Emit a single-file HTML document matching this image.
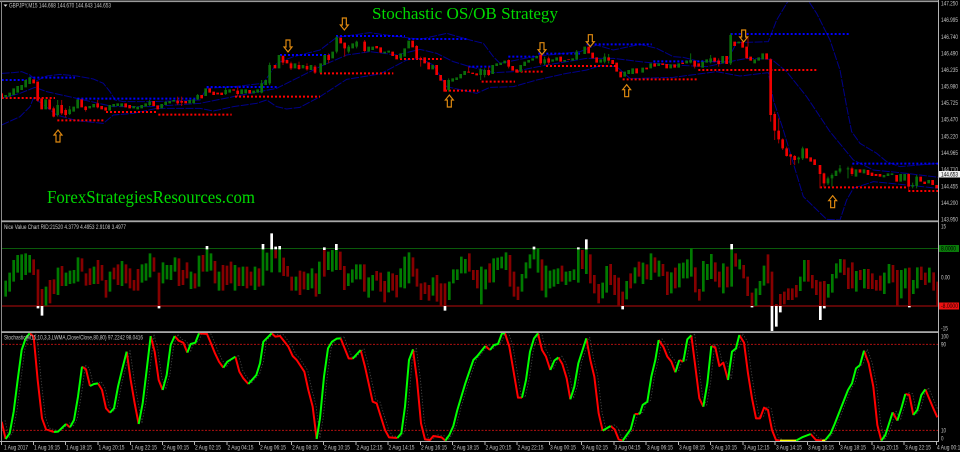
<!DOCTYPE html>
<html><head><meta charset="utf-8"><title>Stochastic OS/OB Strategy</title>
<style>
html,body{margin:0;padding:0;background:#000;width:960px;height:452px;overflow:hidden}
svg{display:block;filter:blur(.3px)}
.ax{font:6.4px "Liberation Sans",sans-serif;fill:#c4c4c4}
</style></head><body>
<svg width="960" height="452" viewBox="0 0 960 452" xmlns="http://www.w3.org/2000/svg">
<defs>
<clipPath id="cm"><rect x="2" y="2" width="936" height="218"/></clipPath>
<clipPath id="cv"><rect x="2" y="222" width="936" height="109"/></clipPath>
<clipPath id="cs"><rect x="2" y="333" width="936" height="108"/></clipPath>
<path id="sr" d="M5 605L17 657M89 340L101 350 113 480 126 595 138 628 162 636M198 612L210 622M246 440L258 448 270 498M294 490L306 510 318 565 330 578M380 395L392 480 404 550 416 612M452 348L464 395 476 480 488 510M524 348L536 362 550 368 562 398M597 340L621 342 633 370 645 400 657 425 670 443M706 410L718 455 730 475 745 492M815 340L826 350 840 348 865 380 878 408 890 420 913 455 925 510 938 560 950 657M1022 355L1046 415 1058 416M1082 390L1095 440 1118 545 1130 550 1155 630 1167 652 1192 654M1239 388L1251 480 1263 610 1275 658 1290 660 1300 648 1325 652 1336 662M1456 378L1470 390M1515 340L1528 380 1540 450 1554 533 1566 533M1614 340L1626 390 1638 410 1651 450M1675 412L1687 432 1700 475 1711 538M1759 355L1771 420 1783 470 1796 580 1808 632M1832 618L1844 628 1856 658 1868 662M1904 582L1916 582M1976 360L1990 380 2002 410 2014 425 2026 457M2038 420L2050 425M2074 346L2086 440 2098 535 2110 560M2134 378L2146 382 2158 438 2170 428 2184 480M2218 345L2232 368 2244 460 2256 535 2268 595 2280 595 2292 563 2304 570 2316 630 2328 660 2340 662M2432 642L2448 660 2466 662M2592 392L2606 430 2620 500 2632 615 2644 662M2678 577L2692 602M2716 522L2728 525 2740 585M2776 508L2800 565 2812 592"/>
<path id="sg" d="M17 657L29 640 41 575 53 480 65 390 77 355 89 340M162 636L174 635 198 612M210 622L222 600 234 530 246 440M270 498L282 492 294 490M330 578L342 565 354 500 366 450 380 395M416 612L428 550 440 450 452 348M488 510L500 465 512 375 524 348M562 398L572 372 586 368 597 340M670 443L682 425 706 410M745 492L769 465 780 430 790 365 815 340M950 657L960 595 972 470 984 385 996 365 1010 356 1022 355M1058 416L1082 390M1192 654L1204 640 1215 560 1227 420 1239 388M1336 662L1348 645 1360 618 1372 570 1396 490 1420 420 1432 408 1456 378M1470 390L1482 375 1494 372 1506 340 1515 340M1566 533L1578 480 1590 395 1602 355 1614 340M1651 450L1663 422 1675 412M1711 538L1723 500 1735 430 1759 355M1808 632L1832 618M1868 662L1880 645 1892 628 1904 583M1916 582L1920 580 1928 555 1942 545 1954 470 1966 420 1976 360M2026 457L2038 420M2050 425L2062 358 2074 346M2110 560L2122 490 2134 378M2184 480L2196 395 2208 385 2218 345M2388 662L2406 652 2432 642M2476 660L2492 640 2504 612 2544 510 2556 490 2568 445 2580 435 2592 392M2644 662L2656 645 2678 577M2692 602L2704 565 2716 522M2740 585L2752 570 2764 525 2776 508"/>
<path id="au" d="M0 -18L12 -3 6 -3 6 18 -6 18 -6 -3 -12 -3Z"/>
<path id="ad" d="M0 18L12 3 6 3 6 -18 -6 -18 -6 3 -12 3Z"/>
</defs>
<rect width="960" height="452" fill="#000"/>

<!-- MAIN CHART -->
<g clip-path="url(#cm)">
<g transform="scale(.33333)" fill="none">
<g stroke="#00008b" stroke-width="3" stroke-dasharray="24 4">
<path d="M5 220L40 218 65 215 90 225 110 242 140 228 180 223 230 228 280 237 310 250 330 275 345 300 370 305 450 305 600 300 620 265 700 260 790 250 830 190 880 170 960 150 1010 112 1110 98 1180 108 1260 118 1340 100 1410 120 1450 130 1480 170 1500 190 1600 170 1740 155 1790 135 1840 150 1920 133 1970 145 2020 170 2050 172 2100 185 2180 185 2210 128 2305 125 2330 60 2360 10 2370 -5 2420 -5 2450 40 2490 120 2520 210 2540 320 2555 395 2580 430 2630 460 2660 485 2700 500 2815 490"/>
<path d="M5 295L60 280 105 262 140 275 230 295 340 320 450 320 600 310 700 290 830 265 960 200 1040 165 1110 155 1190 165 1260 148 1310 160 1360 185 1410 200 1480 218 1540 215 1640 195 1760 175 1840 175 1920 185 2020 195 2120 200 2190 185 2240 175 2315 178 2360 215 2420 290 2490 395 2560 480 2620 510 2720 520 2815 532"/>
<path d="M5 375L60 350 90 320 100 295 125 310 170 345 230 362 310 370 340 345 400 340 470 325 600 325 640 333 700 320 770 310 800 300 830 320 860 327 900 322 960 290 1040 238 1140 222 1220 180 1260 175 1300 195 1340 260 1430 280 1470 262 1540 260 1610 240 1690 222 1760 210 1800 197 1850 200 1890 235 1920 235 2020 232 2150 215 2220 228 2305 218 2320 300 2350 390 2380 490 2410 590 2480 658 2520 660 2540 600 2560 565 2620 545 2720 555 2815 565"/>
</g>
<g stroke="#0000ff" stroke-width="6" stroke-dasharray="6 6">
<path d="M5 240H80M88 233H225M232 296H595M620 261H830M840 165H1000M1008 108H1215M1225 117H1400M1405 200H1480M1525 170H1610M1615 161H1740M1760 133H1955M1960 184H2190M2192 102H2548M2557 491H2815"/>
</g>
<g stroke="#ff0000" stroke-width="6" stroke-dasharray="6 6">
<path d="M5 294H165M172 361H310M318 336H470M475 344H695M705 290H960M960 220H1180M1200 177H1325M1335 272H1435M1445 245H1545M1550 215H1630M1638 198H1850M1868 238H2090M2095 210H2450M2460 562H2720M2725 573H2815"/>
</g>
<path stroke="#a00000" stroke-width="3" fill="none" d="M113 245V305M161 320V352M185 300V345M197 325V352M257 318V335M293 300V325M533 290V315M545 290V318M713 260V290M849 165V195M873 185V210M897 185V210M921 190V212M945 195V222M986 160V190M1034 128V170M1094 120V158M1250 135V178M1262 170V200M1334 240V275M1406 200V218M1466 200V228M1526 178V205M1622 160V195M1646 170V195M2084 180V205M2156 175V200M2244 112V140M2312 175V365M2324 335V420M2336 355V430M2348 415V450M2360 440V470M2372 462V495M2384 465V495M2460 495V565M2472 518V562M2556 500V528M2726 520V570"/>
<path stroke="#0a6a0a" stroke-width="3" fill="none" d="M173 300V350M209 318V345M449 300V318M593 282V300M677 262V285M785 240V280M809 188V255M1010 108V160M1046 135V160M1070 122V145M1442 205V240M1454 205V232M1346 235V275M1634 170V195M1730 150V180M1814 160V190M1826 162V190M2072 160V190M2132 165V190M2192 100V195M2396 470V490M2408 440V480M2484 530V555M2496 520V560M2520 495V520M2544 500V535M2738 548V565M2750 525V565"/>
<path stroke="#f00000" stroke-width="8" fill="none" d="M5 280V295M101 238V250M113 245V302M125 295V328M149 298V328M161 325V350M185 315V340M197 330V345M245 298V322M257 320V330M293 310V322M305 318V328M317 322V332M377 310V322M389 315V325M461 303V318M473 316V328M533 302V310M545 303V308M557 303V310M605 285V295M629 265V278M641 275V285M653 278V283M665 278V285M701 268V272M713 272V282M749 270V280M825 195V205M849 168V188M861 180V190M873 190V205M897 195V207M921 198V208M945 200V218
M986 165V180M1022 113V130M1034 128V145M1094 125V153M1130 138V145M1142 142V158M1178 155V168M1190 165V178M1238 122V142M1250 138V175M1262 175V180M1274 172V190M1286 187V208M1310 195V225M1322 225V242M1334 240V275M1406 215V218M1418 218V222M1430 220V226M1466 210V225M1526 180V200M1538 198V212M1550 208V218M1622 165V190M1646 175V188M1682 170V185M1706 178V180M1766 140V160M1778 158V175M1790 172V188M1826 172V182M1838 180V192M1850 188V215M1862 215V232M1910 205V220
M1940 203V208M1964 190V200M1988 190V195M2000 192V205M2024 193V203M2048 188V192M2084 183V200M2096 190V200M2144 173V185M2156 182V192M2180 168V192M2204 125V138M2228 125V143M2240 140V175M2252 170V182M2300 160V178M2312 178V345M2324 342V392M2336 392V418M2348 418V445M2360 445V468M2372 463V470M2384 468V480M2420 445V475M2432 472V485M2444 478V495M2460 495V522M2472 520V550M2556 505V522M2580 508V518M2604 510V525M2616 518V528M2628 522V528M2640 522V530M2690 525V545M2726 522V560M2762 530V545M2774 545V552M2798 540V555M2810 555V565"/>
<path stroke="#0a6e0a" stroke-width="8" fill="none" d="M17 285V292M29 278V290M41 265V285M53 258V278M65 255V270M77 240V262M89 232V252M137 298V328M173 315V345M209 328V342M221 320V335M233 298V325M269 318V325M281 312V322M329 315V332M341 312V320M353 310V318M365 310V320M401 318V325M413 320V328M425 315V325M437 310V320M449 305V315M485 312V325M497 305V315M509 303V310M521 300V305M569 300V310M581 298V310M593 285V298M617 265V288M677 270V282M689 268V278M725 268V282M737 268V280M761 272V280M773 268V278M785 250V278M797 240V255M809 195V250M837 165V205M885 190V205M909 195V205M933 195V210
M962 190V218M974 165V195M998 155V175M1010 112V155M1046 140V155M1058 130V145M1070 125V140M1106 140V155M1118 140V150M1154 155V160M1166 152V158M1202 160V175M1214 145V170M1226 122V145M1298 195V208M1346 240V270M1358 235V245M1370 232V240M1382 222V235M1394 213V225M1442 208V225M1454 210V225M1478 195V222M1490 190V198M1502 188V195M1514 182V190M1562 195V216M1574 185V198M1586 180V188M1598 175V182M1610 168V175M1634 178V190M1658 178V185M1670 172V182M1694 180V185M1718 175V182M1730 155V178M1754 140V162M1802 178V188M1814 170V185M1874 215V230M1886 210V222M1898 205V222
M1928 203V218M1952 190V205M1976 190V198M2012 193V205M2036 190V203M2060 182V190M2072 180V188M2108 185V203M2120 178V188M2132 175V186M2168 168V190M2192 105V190M2216 125V130M2264 178V190M2276 172V182M2288 160V178M2396 473V478M2408 445V475M2484 535V550M2496 525V535M2508 512V528M2520 505V515M2544 505V508M2568 508V530M2592 508V520M2652 525V532M2664 520V528M2676 520V525M2702 522V545M2714 522V542M2738 555V560M2750 530V558M2786 540V550"/>
<g fill="#000" stroke="#e08a10" stroke-width="3.5" stroke-linejoin="miter">
<use href="#au" transform="translate(174 408)"/>
<use href="#ad" transform="translate(864 138)"/>
<use href="#ad" transform="translate(1033 72)"/>
<use href="#au" transform="translate(1348 303)"/>
<use href="#ad" transform="translate(1626 146)"/>
<use href="#ad" transform="translate(1771 122)"/>
<use href="#au" transform="translate(1880 272)"/>
<use href="#ad" transform="translate(2231 108)"/>
<use href="#au" transform="translate(2498 605)"/>
</g>
</g>
</g>

<!-- VALUE CHART -->
<line x1="2" y1="248.5" x2="938" y2="248.5" stroke="#0a5a0a" stroke-width="1"/>
<line x1="2" y1="306" x2="938" y2="306" stroke="#7a0808" stroke-width="1.5"/>
<g clip-path="url(#cv)">
<g transform="translate(0 220) scale(.33333)" fill="none" stroke-width="8">
<path stroke="#007a00" d="M17 182V230M29 158V215M41 120V185M53 105V158M65 103V180M77 100V165M89 105V158M138 200V257M174 143V225M198 158V198M210 152V192M222 150V190M234 112V185M282 140V192M330 155V215M366 123V198M426 133V188M438 130V182M450 100V172M489 127V190M501 135V178M513 135V180M525 112V155M573 155V207M597 107V200M621 88V155M633 100V152M657 155V212M705 135V212M729 140V198M765 140V210M789 88V197M801 98V152M815 88V157M839 88V157M888 170V212M924 160V210M936 145V205M958 125V222
M985 95V150M997 90V155M1009 90V150M1045 160V198M1057 148V188M1069 133V178M1081 133V178M1106 172V233M1118 165V212M1166 155V217M1202 145V202M1214 110V205M1227 97V190M1299 172V227M1348 185V240M1360 148V190M1372 148V180M1384 110V160M1396 117V160M1444 140V253M1457 148V208M1481 115V187M1493 113V150M1505 110V145M1518 97V150M1566 162V215M1578 127V175M1590 103V145M1602 88V118M1614 85V158M1638 137V232M1650 152V205M1662 148V200M1674 145V192M1698 155V195M1710 153V185M1722 148V180M1735 88V188M1759 88V162M1808 188V235M1820 138V218M1880 183V238M1905 142V190
M1929 128V192M1953 100V180M1977 122V170M2014 157V220M2038 130V202M2050 128V175M2062 118V175M2074 85V170M2110 123V215M2122 132V180M2134 102V177M2170 130V220M2195 88V200M2219 118V148M2268 205V258M2280 183V225M2292 137V197M2401 170V213M2413 120V185M2485 192V233M2497 162V218M2509 130V175M2521 117V158M2569 153V215M2593 147V205M2653 158V222M2667 132V190M2704 150V235M2716 145V205M2740 180V222M2752 142V205M2788 143V188"/>
<path stroke="#860000" d="M101 118V165M114 148V258M126 207V258M150 180V250M162 178V222M186 138V198M246 115V155M258 160V197M270 145V195M294 120V192M306 135V182M318 180V233M342 143V178M354 133V195M378 133V190M390 145V205M402 180V212M414 147V212M462 112V155M477 158V258M537 115V198M549 150V195M561 127V175M585 160V205M609 105V155M645 123V190M669 135V212M681 137V195M693 125V190M717 142V198M741 140V205M753 155V197M777 145V200M827 90V115M851 113V168M863 138V170M875 170V212M900 152V225M912 155V208M948 160V230
M973 90V170M1021 95V150M1033 138V210M1093 133V215M1130 153V182M1142 158V215M1154 183V247M1178 160V212M1190 165V232M1239 112V170M1251 146V200M1263 190V240M1275 187V222M1287 195V242M1311 165V245M1323 190V258M1335 190V258M1408 100V155M1420 150V180M1432 150V205M1469 130V188M1530 105V200M1542 155V230M1554 200V240M1626 118V212M1686 137V185M1747 90V147M1771 103V190M1783 165V220M1796 192V250M1832 132V195M1844 165V225M1856 173V258M1868 215V258M1892 160V205M1917 125V170
M1941 133V178M1965 112V158M1989 132V168M2002 155V225M2026 143V205M2086 142V217M2098 207V242M2146 127V185M2158 155V202M2182 140V202M2207 100V140M2231 135V175M2243 170V228M2256 218V258M2304 103V190M2316 155V258M2329 252V258M2341 222V258M2353 215V253M2365 205V240M2377 205V240M2389 195V232M2425 120V185M2437 165V205M2449 180V225M2461 185V258M2473 183V258M2533 118V165M2545 143V207M2557 127V205M2581 150V180M2605 147V207M2617 160V207M2629 180V212M2641 167V212M2679 135V187M2692 150V258M2728 143V258M2764 140V180M2776 158V195M2801 157V212M2813 185V258"/>
<path stroke="#ffffff" d="M114 258V265M126 258V287M477 258V265M621 78V88M789 72V88M815 40V88M827 80V88M839 78V88M973 82V90M1009 72V90M1335 258V272M1602 80V88M1735 82V88M1759 58V88M1868 258V268M2195 72V88M2256 258V262M2316 258V335M2329 258V320M2341 258V277M2461 258V300M2473 258V265M2728 258V262"/>
</g>
</g>

<!-- STOCHASTIC -->
<line x1="2" y1="344.4" x2="938" y2="344.4" stroke="#b01010" stroke-width="1" stroke-dasharray="2 1.5"/>
<line x1="2" y1="430.4" x2="938" y2="430.4" stroke="#b01010" stroke-width="1" stroke-dasharray="2 1.5"/>
<g clip-path="url(#cs)">
<g transform="translate(0 220) scale(.33333)" fill="none" stroke-linejoin="round">
<g transform="translate(10 -4)" stroke="#444" stroke-width="2.500" stroke-dasharray="4 5"><use href="#sr"/><use href="#sg"/></g>
<g stroke="#ff0000" stroke-width="6"><use href="#sr"/></g>
<g stroke="#00ff00" stroke-width="6"><use href="#sg"/></g>
<path stroke="#ffff00" stroke-width="6" d="M2340 662H2388M2466 662H2476"/>
</g>
</g>

<!-- frame -->
<rect x="0" y="0.5" width="939" height="1.6" fill="#9a9a9a"/>
<rect x="1" y="1" width="1" height="440" fill="#8a8a8a"/>
<rect x="1" y="220.4" width="938" height="1.8" fill="#a8a8a8"/>
<rect x="1" y="331.2" width="938" height="1.8" fill="#a8a8a8"/>
<rect x="938" y="0" width="1" height="442" fill="#b4b4b4"/>
<rect x="0" y="441" width="939" height="1" fill="#b4b4b4"/>

<!-- titles -->
<text x="372" y="19" font-family="'Liberation Serif',serif" font-size="17" fill="#00d800" textLength="186" lengthAdjust="spacingAndGlyphs">Stochastic OS/OB Strategy</text>
<text x="47" y="203" font-family="'Liberation Serif',serif" font-size="17.5" fill="#00d800" textLength="208" lengthAdjust="spacingAndGlyphs">ForexStrategiesResources.com</text>

<path d="M3.5 4.5H7.5L5.5 6.8Z" fill="#ddd"/>
<text class="ax" x="9" y="7.500" textLength="102" lengthAdjust="spacingAndGlyphs">GBPJPY,M15  144.668 144.670 144.643 144.653</text>
<text class="ax" x="4" y="229" textLength="122" lengthAdjust="spacingAndGlyphs">Nice Value Chart RID:21520 4.3779 4.4953 2.9108 3.4977</text>
<text class="ax" x="4" y="339.500" textLength="139" lengthAdjust="spacingAndGlyphs">Stochastic(M15,10,3,3,LWMA,Close/Close,80,80) 97.2242 98.0416</text>

<!-- price axis -->
<g lengthAdjust="spacingAndGlyphs">
<text class="ax" x="941" y="5.5" textLength="17" lengthAdjust="spacingAndGlyphs">147.250</text>
<text class="ax" x="941" y="22" textLength="17" lengthAdjust="spacingAndGlyphs">146.995</text>
<text class="ax" x="941" y="39" textLength="17" lengthAdjust="spacingAndGlyphs">146.740</text>
<text class="ax" x="941" y="55.5" textLength="17" lengthAdjust="spacingAndGlyphs">146.490</text>
<text class="ax" x="941" y="72" textLength="17" lengthAdjust="spacingAndGlyphs">146.235</text>
<text class="ax" x="941" y="88.5" textLength="17" lengthAdjust="spacingAndGlyphs">145.980</text>
<text class="ax" x="941" y="105" textLength="17" lengthAdjust="spacingAndGlyphs">145.725</text>
<text class="ax" x="941" y="121.5" textLength="17" lengthAdjust="spacingAndGlyphs">145.470</text>
<text class="ax" x="941" y="138.5" textLength="17" lengthAdjust="spacingAndGlyphs">145.220</text>
<text class="ax" x="941" y="155" textLength="17" lengthAdjust="spacingAndGlyphs">144.965</text>
<text class="ax" x="941" y="171.5" textLength="17" lengthAdjust="spacingAndGlyphs">144.710</text>
<text class="ax" x="941" y="188.5" textLength="17" lengthAdjust="spacingAndGlyphs">144.455</text>
<text class="ax" x="941" y="205" textLength="17" lengthAdjust="spacingAndGlyphs">144.200</text>
<text class="ax" x="941" y="221.5" textLength="17" lengthAdjust="spacingAndGlyphs">143.950</text>
<text class="ax" x="941" y="228.5" textLength="5" lengthAdjust="spacingAndGlyphs">15</text>
<text class="ax" x="941" y="279.500" textLength="9" lengthAdjust="spacingAndGlyphs">0.00</text>
<text class="ax" x="941" y="330.500" textLength="7" lengthAdjust="spacingAndGlyphs">-15</text>
<text class="ax" x="941" y="338.500" textLength="7.500" lengthAdjust="spacingAndGlyphs">100</text>
<text class="ax" x="941" y="346.500" textLength="5" lengthAdjust="spacingAndGlyphs">90</text>
<text class="ax" x="941" y="432.500" textLength="5" lengthAdjust="spacingAndGlyphs">10</text>
<text class="ax" x="941" y="440.500" textLength="2.500" lengthAdjust="spacingAndGlyphs">0</text>
</g>
<rect x="939" y="171" width="21" height="6.5" fill="#f0f0f0"/>
<text x="941" y="176.5" font-family="'Liberation Sans',sans-serif" font-size="6.4" fill="#000" textLength="17" lengthAdjust="spacingAndGlyphs">144.653</text>
<rect x="939" y="245" width="20" height="7" fill="#0a7a0a"/>
<text x="941" y="250.5" font-family="'Liberation Sans',sans-serif" font-size="6.4" fill="#000" textLength="15" lengthAdjust="spacingAndGlyphs">8.0000</text>
<rect x="939" y="302.5" width="20" height="7" fill="#ee1111"/>
<text x="941" y="308" font-family="'Liberation Sans',sans-serif" font-size="6.4" fill="#200" textLength="17" lengthAdjust="spacingAndGlyphs">-8.0000</text>

<!-- time ticks -->
<path stroke="#b4b4b4" stroke-width="1" d="M1.5 442v3M33.5 442v3M65.5 442v3M98 442v3M130.500 442v3M162.500 442v3M194.500 442v3M227 442v3M259.500 442v3M291.500 442v3M323.500 442v3M356 442v3M388 442v3M420.500 442v3M452.500 442v3M485 442v3M517 442v3M549.500 442v3M581.500 442v3M614 442v3M646 442v3M678.500 442v3M710.500 442v3M743 442v3M775 442v3M807.500 442v3M839.500 442v3M872 442v3M904 442v3M936.500 442v3"/>
<text class="ax" x="4" y="449.500" textLength="24" lengthAdjust="spacingAndGlyphs">1 Aug 2017</text>
<text class="ax" x="34" y="449.500" textLength="26" lengthAdjust="spacingAndGlyphs">1 Aug 16:15</text>
<text class="ax" x="66" y="449.500" textLength="26" lengthAdjust="spacingAndGlyphs">1 Aug 18:15</text>
<text class="ax" x="98.500" y="449.500" textLength="26" lengthAdjust="spacingAndGlyphs">1 Aug 20:15</text>
<text class="ax" x="131" y="449.500" textLength="26" lengthAdjust="spacingAndGlyphs">1 Aug 22:15</text>
<text class="ax" x="163" y="449.500" textLength="26" lengthAdjust="spacingAndGlyphs">2 Aug 00:15</text>
<text class="ax" x="195" y="449.500" textLength="26" lengthAdjust="spacingAndGlyphs">2 Aug 02:15</text>
<text class="ax" x="227.500" y="449.500" textLength="26" lengthAdjust="spacingAndGlyphs">2 Aug 04:15</text>
<text class="ax" x="260" y="449.500" textLength="26" lengthAdjust="spacingAndGlyphs">2 Aug 06:15</text>
<text class="ax" x="292" y="449.500" textLength="26" lengthAdjust="spacingAndGlyphs">2 Aug 08:15</text>
<text class="ax" x="324" y="449.500" textLength="26" lengthAdjust="spacingAndGlyphs">2 Aug 10:15</text>
<text class="ax" x="356.500" y="449.500" textLength="26" lengthAdjust="spacingAndGlyphs">2 Aug 12:15</text>
<text class="ax" x="388.500" y="449.500" textLength="26" lengthAdjust="spacingAndGlyphs">2 Aug 14:15</text>
<text class="ax" x="421" y="449.500" textLength="26" lengthAdjust="spacingAndGlyphs">2 Aug 16:15</text>
<text class="ax" x="453" y="449.500" textLength="26" lengthAdjust="spacingAndGlyphs">2 Aug 18:15</text>
<text class="ax" x="485.500" y="449.500" textLength="26" lengthAdjust="spacingAndGlyphs">2 Aug 20:15</text>
<text class="ax" x="517.500" y="449.500" textLength="26" lengthAdjust="spacingAndGlyphs">2 Aug 22:15</text>
<text class="ax" x="550" y="449.500" textLength="26" lengthAdjust="spacingAndGlyphs">3 Aug 00:15</text>
<text class="ax" x="582" y="449.500" textLength="26" lengthAdjust="spacingAndGlyphs">3 Aug 02:15</text>
<text class="ax" x="614.500" y="449.500" textLength="26" lengthAdjust="spacingAndGlyphs">3 Aug 04:15</text>
<text class="ax" x="647" y="449.500" textLength="26" lengthAdjust="spacingAndGlyphs">3 Aug 06:15</text>
<text class="ax" x="679" y="449.500" textLength="26" lengthAdjust="spacingAndGlyphs">3 Aug 08:15</text>
<text class="ax" x="711" y="449.500" textLength="26" lengthAdjust="spacingAndGlyphs">3 Aug 10:15</text>
<text class="ax" x="743.500" y="449.500" textLength="26" lengthAdjust="spacingAndGlyphs">3 Aug 12:15</text>
<text class="ax" x="776" y="449.500" textLength="26" lengthAdjust="spacingAndGlyphs">3 Aug 14:15</text>
<text class="ax" x="808" y="449.500" textLength="26" lengthAdjust="spacingAndGlyphs">3 Aug 16:15</text>
<text class="ax" x="840" y="449.500" textLength="26" lengthAdjust="spacingAndGlyphs">3 Aug 18:15</text>
<text class="ax" x="872.500" y="449.500" textLength="26" lengthAdjust="spacingAndGlyphs">3 Aug 20:15</text>
<text class="ax" x="905" y="449.500" textLength="26" lengthAdjust="spacingAndGlyphs">3 Aug 22:15</text>
<text class="ax" x="937" y="449.500" textLength="26" lengthAdjust="spacingAndGlyphs">4 Aug 00:15</text>
</svg>
</body></html>
